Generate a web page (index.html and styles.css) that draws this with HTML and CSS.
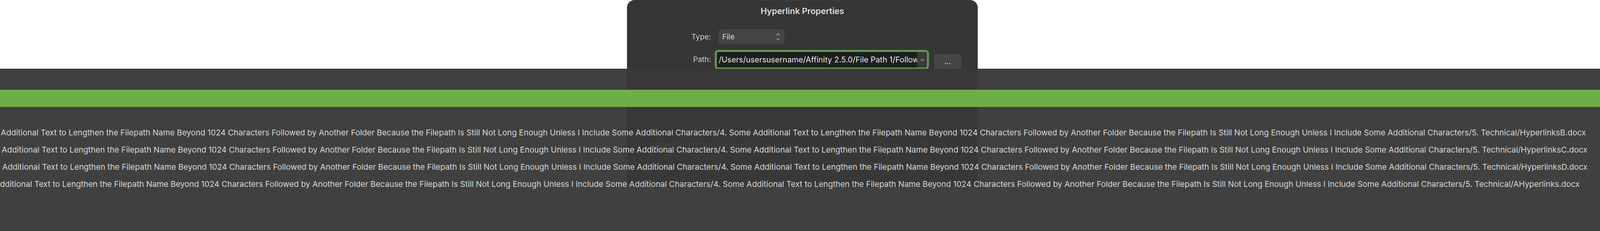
FILE: index.html
```html
<!DOCTYPE html>
<html lang="en">
<head>
    <meta charset="UTF-8">
    <meta name="viewport" content="width=device-width, initial-scale=1.0">
    <title>Hyperlink Properties</title>
    <link rel="stylesheet" href="styles.css">
</head>
<body>
    <div class="desk">
        <div class="dialog">
            <div class="dialog-title">Hyperlink Properties</div>

            <div class="form-row row-type">
                <label class="form-label">Type:</label>
                <div class="popup popup-type">
                    <span>File</span>
                    <svg class="updown" width="12" height="22" viewBox="0 0 12 22">
                        <polyline points="2,7 6,3 10,7" />
                        <polyline points="2,15 6,19 10,15" />
                    </svg>
                </div>
            </div>

            <div class="form-row row-path">
                <label class="form-label">Path:</label>
                <div class="path-field">
                    <span class="path-text">/Users/usersusername/Affinity 2.5.0/File Path 1/Followed by Some Additional Text to Lengthen the Filepath Name</span>
                    <span class="path-arrow">
                        <svg width="10" height="7" viewBox="0 0 10 7"><polyline points="1,1 5,6 9,1" /></svg>
                    </span>
                </div>
                <button class="browse">...</button>
            </div>

            <div class="form-row row-check">
                <span class="form-label"></span>
                <span class="checkbox"></span>
                <span class="check-text">Include file on export</span>
            </div>

            <div class="form-row row-field">
                <label class="form-label">Field:</label>
                <div class="popup popup-wide">
                    <span></span>
                    <svg class="updown" width="12" height="22" viewBox="0 0 12 22">
                        <polyline points="2,7 6,3 10,7" />
                        <polyline points="2,15 6,19 10,15" />
                    </svg>
                </div>
            </div>

            <div class="form-row row-style">
                <label class="form-label">Character Style:</label>
                <div class="popup popup-wide">
                    <span>Hyperlink</span>
                    <svg class="updown" width="12" height="22" viewBox="0 0 12 22">
                        <polyline points="2,7 6,3 10,7" />
                        <polyline points="2,15 6,19 10,15" />
                    </svg>
                </div>
            </div>

            <div class="dialog-buttons">
                <button class="btn btn-cancel">Cancel</button>
                <button class="btn btn-ok">OK</button>
            </div>
        </div>

        <div class="panel">
            <div class="green-bar"></div>
            <div class="rows">
                <div class="row row-b"><span>Characters/3. Some Additional Text to Lengthen the Filepath Name Beyond 1024 Characters Followed by Another Folder Because the Filepath Is Still Not Long Enough Unless I Include Some Additional Characters/4. Some Additional Text to Lengthen the Filepath Name Beyond 1024 Characters Followed by Another Folder Because the Filepath Is Still Not Long Enough Unless I Include Some Additional Characters/5. Technical/HyperlinksB.docx</span></div>
                <div class="row row-c"><span>Characters/3. Some Additional Text to Lengthen the Filepath Name Beyond 1024 Characters Followed by Another Folder Because the Filepath Is Still Not Long Enough Unless I Include Some Additional Characters/4. Some Additional Text to Lengthen the Filepath Name Beyond 1024 Characters Followed by Another Folder Because the Filepath Is Still Not Long Enough Unless I Include Some Additional Characters/5. Technical/HyperlinksC.docx</span></div>
                <div class="row row-d"><span>Characters/3. Some Additional Text to Lengthen the Filepath Name Beyond 1024 Characters Followed by Another Folder Because the Filepath Is Still Not Long Enough Unless I Include Some Additional Characters/4. Some Additional Text to Lengthen the Filepath Name Beyond 1024 Characters Followed by Another Folder Because the Filepath Is Still Not Long Enough Unless I Include Some Additional Characters/5. Technical/HyperlinksD.docx</span></div>
                <div class="row row-a"><span>Characters/3. Some Additional Text to Lengthen the Filepath Name Beyond 1024 Characters Followed by Another Folder Because the Filepath Is Still Not Long Enough Unless I Include Some Additional Characters/4. Some Additional Text to Lengthen the Filepath Name Beyond 1024 Characters Followed by Another Folder Because the Filepath Is Still Not Long Enough Unless I Include Some Additional Characters/5. Technical/AHyperlinks.docx</span></div>
            </div>
        </div>
    </div>
</body>
</html>
```

FILE: styles.css
```css
body {
    margin: 0;
    padding: 0;
    background-color: #fff;
    font-family: Inter, "Noto Sans", sans-serif;
    overflow: hidden;
}
.desk {
    position: relative;
    width: 4110px;
    height: 592px;
    overflow: hidden;
}

/* dialog window (sits behind the list panel) */
.dialog {
    position: absolute;
    left: 1605px;
    top: 0;
    z-index: 1;
    width: 898px;
    height: 479px;
    box-sizing: border-box;
    background-color: #363636;
    border-radius: 20px;
    box-shadow: inset 0 0 0 1px #454545;
    color: #cfcfcf;
    font-size: 19px;
}
.dialog-title {
    height: 56px;
    line-height: 56px;
    text-align: center;
    font-size: 21.5px;
    font-weight: 600;
    color: #dedede;
}
.form-row {
    display: flex;
    align-items: center;
    gap: 20px;
}
.form-label {
    width: 215px;
    flex-shrink: 0;
    text-align: right;
    color: #c9c9c9;
}
.row-type {
    margin-top: 19px;
    height: 38px;
}
.row-path {
    margin-top: 15px;
    height: 45px;
    align-items: flex-start;
}
.row-path .form-label {
    line-height: 50px;
}
.row-check {
    margin-top: 19px;
    height: 40px;
    gap: 10px;
}
.row-check .form-label {
    margin-right: 10px;
}
.row-field {
    margin-top: 69px;
    height: 38px;
}
.row-style {
    margin-top: 14px;
    height: 38px;
}

.popup {
    display: flex;
    align-items: center;
    justify-content: space-between;
    box-sizing: border-box;
    height: 38px;
    padding: 0 10px 0 9px;
    background-color: #454545;
    border-radius: 6px;
    color: #d6d6d6;
}
.popup-type {
    width: 168px;
}
.popup-wide {
    width: 538px;
    background-color: #3d3d3d;
}
.updown polyline,
.path-arrow polyline {
    fill: none;
    stroke: #bdbdbd;
    stroke-width: 1.3;
}

.path-field {
    display: flex;
    box-sizing: border-box;
    width: 538px;
    height: 40px;
    margin-top: 5px;
    margin-left: -5px;
    background-color: #1e1e1e;
    border-radius: 4px;
    box-shadow: 0 0 0 5px #629c52;
    overflow: hidden;
}
.path-text {
    flex: 1;
    padding-left: 5px;
    line-height: 40px;
    font-size: 20px;
    white-space: nowrap;
    overflow: hidden;
    color: #e6e6e6;
}
.path-arrow {
    display: flex;
    align-items: center;
    justify-content: center;
    width: 25px;
    background-color: #3a3a3a;
}
.browse {
    width: 70px;
    height: 40px;
    margin-top: 10px;
    margin-left: -2px;
    border: none;
    border-radius: 6px;
    background-color: #454545;
    color: #dcdcdc;
    font-family: inherit;
    font-size: 19px;
    line-height: 30px;
}

.checkbox {
    width: 26px;
    height: 21px;
    box-sizing: border-box;
    border-radius: 5px;
    background-color: #3f3f3f;
    border: 1px solid #555;
}
.check-text {
    color: #cfcfcf;
}

.dialog-buttons {
    display: flex;
    justify-content: flex-end;
    margin-top: 13px;
    padding-right: 12px;
}
.btn {
    height: 32px;
    border: none;
    background: none;
    color: #cfcfcf;
    font-family: inherit;
    font-size: 19px;
}
.btn-cancel {
    width: 138px;
    border-right: 1px solid #555;
}
.btn-ok {
    width: 188px;
}

/* list panel in front */
.panel {
    position: relative;
    z-index: 2;
    width: 4108px;
    height: 416px;
    margin-top: 176px;
    padding-top: 54px;
    box-sizing: border-box;
    background-color: rgba(56, 56, 56, 0.96);
    border-top-right-radius: 12px;
}
.green-bar {
    height: 44px;
    background-color: #6fae47;
}
.rows {
    margin-top: 44px;
}
.row {
    display: flex;
    justify-content: flex-end;
    overflow: hidden;
    height: 44px;
    line-height: 44px;
    white-space: nowrap;
    font-size: 20.4px;
    color: #d8d8d8;
}
.row span {
    flex-shrink: 0;
}
.row-b {
    padding-right: 48px;
}
.row-c,
.row-d {
    padding-right: 44px;
}
.row-a {
    padding-right: 64px;
}
```
